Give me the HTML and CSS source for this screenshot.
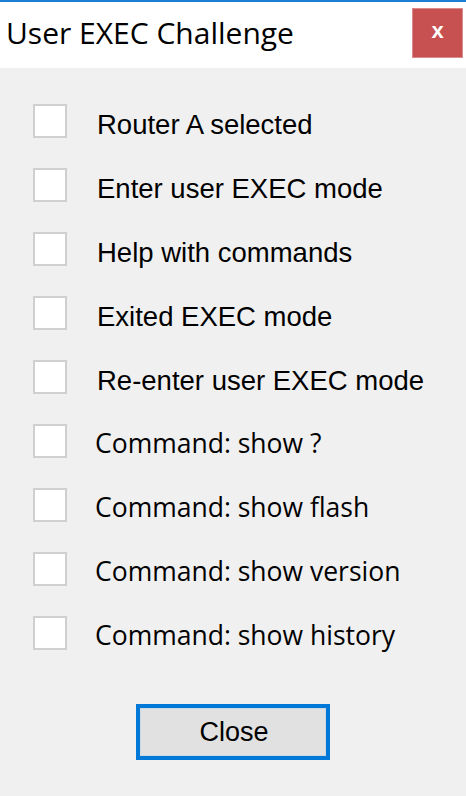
FILE: index.html
```html
<!DOCTYPE html>
<html>
<head>
    <meta content="text/html; charset=utf-8" http-equiv="Content-Type">
    <meta content="width=device-width, initial-scale=1" name="viewport">
    <link rel="stylesheet" href="styles.css">
    <title>User EXEC Challenge</title>
</head>
<body>
    <div class="window">
        <div class="titlebar">
            <span class="title">User EXEC Challenge</span>
            <button class="xbtn">x</button>
        </div>
        <div class="content">
            <ul class="tasks">
                <li class="task"><span class="box"></span><span class="label">Router A selected</span></li>
                <li class="task"><span class="box"></span><span class="label">Enter user EXEC mode</span></li>
                <li class="task"><span class="box"></span><span class="label">Help with commands</span></li>
                <li class="task"><span class="box"></span><span class="label">Exited EXEC mode</span></li>
                <li class="task"><span class="box"></span><span class="label">Re-enter user EXEC mode</span></li>
                <li class="task cmd"><span class="box"></span><span class="label">Command: show ?</span></li>
                <li class="task cmd"><span class="box"></span><span class="label">Command: show flash</span></li>
                <li class="task cmd"><span class="box"></span><span class="label">Command: show version</span></li>
                <li class="task cmd"><span class="box"></span><span class="label">Command: show history</span></li>
            </ul>
            <div class="actions">
                <button class="closebtn">Close</button>
            </div>
        </div>
    </div>
</body>
</html>
```

FILE: styles.css
```css
html, body {
    margin: 0;
    padding: 0;
    background: #f0f0f0;
}

.window {
    width: 466px;
    height: 796px;
    display: flex;
    flex-direction: column;
    border-top: 2px solid #1c7fd4;
    box-sizing: border-box;
}

.titlebar {
    height: 66px;
    background: #ffffff;
    display: flex;
    align-items: flex-start;
    justify-content: space-between;
}

.title {
    font-family: "Open Sans", sans-serif;
    font-size: 30px;
    line-height: 40px;
    color: #000;
    margin: 11px 0 0 6px;
}

.xbtn {
    width: 51px;
    height: 50px;
    margin: 6px 3px 0 0;
    border: 1px solid #d98a8a;
    background: #c75050;
    color: #fff;
    font-family: "Liberation Sans", sans-serif;
    font-size: 22px;
    font-weight: bold;
    padding: 0 0 4px 0;
}

.content {
    flex: 1;
    background: #f0f0f0;
    padding: 36px 0 0 33px;
}

.tasks {
    list-style: none;
    margin: 0;
    padding: 0;
    display: flex;
    flex-direction: column;
    gap: 30px;
}

.task {
    display: flex;
    align-items: center;
    height: 34px;
}

.box {
    width: 30px;
    height: 30px;
    border: 2px solid #d0d0d0;
    background: #ffffff;
    flex: none;
}

.label {
    margin-left: 30px;
    padding-top: 7px;
    font-family: "Liberation Sans", sans-serif;
    font-size: 27.5px;
    color: #000;
}

.cmd .label {
    margin-left: 28px;
    padding-top: 4px;
    font-family: "Open Sans", sans-serif;
    font-size: 26.5px;
}

.actions {
    margin-top: 54px;
    padding-left: 103px;
}

.closebtn {
    width: 194px;
    height: 56px;
    border: 4px solid #0078d7;
    box-shadow: inset 0 0 0 1px #cfd8e0;
    background: #e1e1e1;
    font-family: "Liberation Sans", sans-serif;
    font-size: 27px;
    color: #000;
    padding-right: 4px;
}
```
